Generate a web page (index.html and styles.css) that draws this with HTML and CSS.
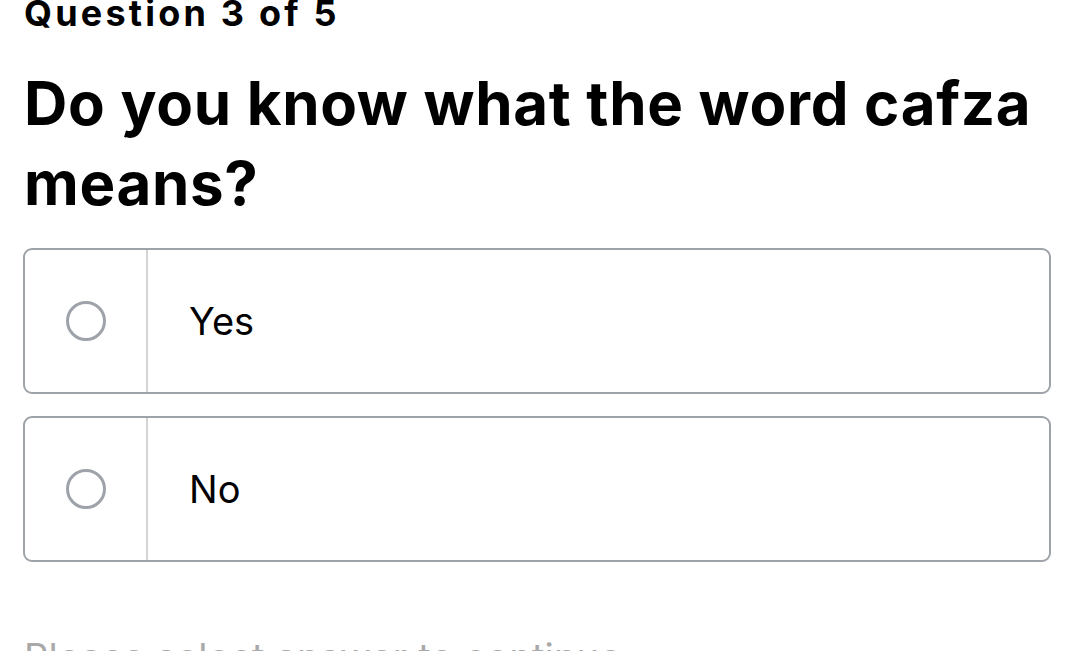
FILE: index.html
```html
<!DOCTYPE html>
<html>
<head>
<meta charset="utf-8">
<link rel="stylesheet" href="styles.css">
</head>
<body>
<main class="page">
  <div class="counter">Question 3 of 5</div>
  <h1 class="question">Do you know what the word cafza means?</h1>
  <div class="options">
    <label class="option">
      <span class="radio-cell"><span class="radio"></span></span>
      <span class="option-text">Yes</span>
    </label>
    <label class="option">
      <span class="radio-cell"><span class="radio"></span></span>
      <span class="option-text">No</span>
    </label>
  </div>
  <p class="hint">Please select answer to continue</p>
</main>
</body>
</html>
```
FILE: styles.css
```css
html, body {
  margin: 0;
  padding: 0;
  background: #ffffff;
}
body {
  font-family: "Inter", "Lato", sans-serif;
  color: #000;
}
.page {
  padding: 0 14px 0 24px;
}
.counter {
  font-weight: 700;
  font-size: 36px;
  line-height: 36px;
  letter-spacing: 3.2px;
  margin-top: -5px;
}
.question {
  font-weight: 700;
  font-size: 60px;
  line-height: 80px;
  letter-spacing: 0.7px;
  margin: 32px -14px 0 0;
}
.options {
  display: flex;
  flex-direction: column;
  gap: 22px;
  margin-top: 25px;
  margin-left: -1px;
}
.option {
  display: flex;
  height: 146px;
  box-sizing: border-box;
  border: 2px solid #9ea2a9;
  border-radius: 9px;
}
.radio-cell {
  width: 121px;
  flex: none;
  display: flex;
  align-items: center;
  justify-content: center;
  border-right: 2px solid #d4d4d6;
}
.radio {
  width: 40px;
  height: 40px;
  box-sizing: border-box;
  border: 3.5px solid #9ea2a9;
  border-radius: 50%;
}
.option-text {
  display: flex;
  align-items: center;
  padding-left: 41px;
  font-size: 38px;
}
.hint {
  margin: 72px 0 0 0;
  font-size: 38px;
  color: #a9a9a9;
  letter-spacing: 0.2px;
}
```
